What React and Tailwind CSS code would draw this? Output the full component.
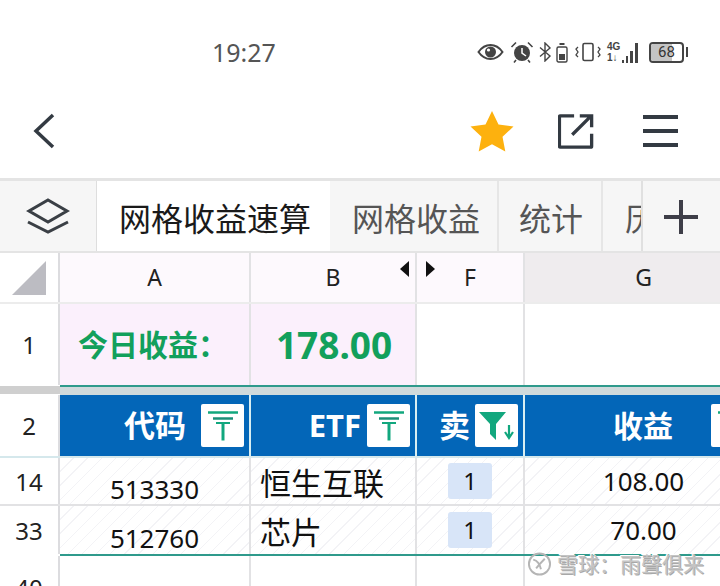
import React from 'react';

const cjk = "font-['Noto_Sans','Noto_Sans_CJK_SC',sans-serif]";
const cols = 'grid grid-cols-[60px_191px_166px_108px_237px]';
const stripes = 'bg-[repeating-linear-gradient(135deg,#ffffff_0,#ffffff_9px,#f3f3f6_9px,#f3f3f6_10px)]';

const StatusIcons = () => (
  <div className="flex items-center text-[#444]">
    <svg width="27" height="18" viewBox="0 0 27 18" fill="none">
      <path d="M1.5 9C5 4 9 2 13.5 2S22 4 25.5 9C22 14 18 16 13.5 16S5 14 1.5 9Z" stroke="currentColor" strokeWidth="2" />
      <circle cx="13.5" cy="9" r="5.5" fill="currentColor" />
      <circle cx="11.5" cy="7" r="1.6" fill="#fff" />
    </svg>
    <svg className="ml-[6px]" width="24" height="22" viewBox="0 0 24 22" fill="none">
      <circle cx="12" cy="12" r="8" fill="currentColor" />
      <path d="M12 7v5l4 3" stroke="#fff" strokeWidth="1.5" />
      <path d="M1.5 6 6 1.5M22.5 6 18 1.5M6 19l-2 2.5M18 19l2 2.5" stroke="currentColor" strokeWidth="1.6" />
    </svg>
    <svg className="ml-[5px]" width="13" height="20" viewBox="0 0 13 20" fill="none">
      <path d="M1 5.500 11 14l-5 5V1l5 5L1 14.500" stroke="currentColor" strokeWidth="1.400" />
    </svg>
    <svg className="ml-[4px]" width="12" height="21" viewBox="0 0 12 21" fill="none">
      <rect x="1" y="5" width="10" height="15" rx="1.500" stroke="currentColor" strokeWidth="1.400" />
      <rect x="3" y="12" width="6" height="6" fill="currentColor" />
      <rect x="3.500" y="1" width="5" height="2" fill="currentColor" />
    </svg>
    <svg className="ml-[7px]" width="26" height="20" viewBox="0 0 26 20" fill="none">
      <rect x="8" y="1.500" width="10" height="17" rx="1.500" stroke="currentColor" strokeWidth="1.600" />
      <path d="M3 5l-2 2 2 3-2 3 2 2M23 5l2 2-2 3 2 3-2 2" stroke="currentColor" strokeWidth="1.300" />
    </svg>
    <div className="ml-[6px] flex w-[33px] h-[22px] items-end">
      <div className="flex flex-col text-[10px] leading-[11px] font-bold font-['Liberation_Sans',sans-serif] w-[15px]">
        <span>4G</span>
        <span>1↓</span>
      </div>
      <div className="flex items-end gap-[2px]">
        <span className="w-[2px] h-[3px] bg-[#444]" />
        <span className="w-[2px] h-[7px] bg-[#444]" />
        <span className="w-[3px] h-[12px] bg-[#444]" />
        <span className="w-[3px] h-[20px] bg-[#444]" />
      </div>
    </div>
    <div className="ml-[9px] flex items-center gap-[2px]">
      <div className="relative w-[35px] h-[21px] rounded-[4px] border-2 border-[#444] overflow-hidden">
        <div className="w-[21px] h-full bg-[#c4c4c4]" />
        <span className="absolute inset-0 text-center text-[15px] leading-[17px] text-[#333] font-['Roboto',sans-serif]">68</span>
      </div>
      <span className="w-[2px] h-[10px] bg-[#444]" />
    </div>
  </div>
);

const Filter = ({ active }) => (
  <div className="w-[43px] h-[43px] shrink-0 rounded-[2px] bg-white flex items-center justify-center">
    {active ? (
      <svg width="38" height="30" viewBox="0 0 38 30">
        <path d="M1 1h27L18 13v16l-6-6V13Z" fill="#12a77e" />
        <path d="M31 14v11M27 21l4 6 4-6" stroke="#12a77e" strokeWidth="2.200" fill="none" />
      </svg>
    ) : (
      <svg width="32" height="30" viewBox="0 0 32 30">
        <path d="M1 1.500h30" stroke="#12a77e" strokeWidth="2.500" />
        <path d="M6 7.500h20" stroke="#1a8f78" strokeWidth="2.500" />
        <path d="M9 12h14" stroke="#12a77e" strokeWidth="2" />
        <path d="M16 12v17.500" stroke="#12a77e" strokeWidth="3" />
      </svg>
    )}
  </div>
);

const Gutter = ({ children, className = '' }) => (
  <div className={`flex items-center justify-center border-r-2 border-[#dcdcdf] text-[24px] text-[#222] bg-white ${className}`}>
    {children}
  </div>
);

const Cell = ({ children, className = '' }) => (
  <div className={`flex items-center border-r-2 border-[#e2e2e4] ${className}`}>{children}</div>
);

const Header = ({ label, gap, active }) => (
  <div className="flex items-center justify-end h-full pr-[5px] bg-[#0366b8] border-r-2 border-[#d8eef2] overflow-hidden">
    <span className="text-[31px] font-bold text-white whitespace-nowrap" style={{ marginRight: gap }}>{label}</span>
    <Filter active={active} />
  </div>
);

const Row = ({ num, code, name, sell, gain, rowClass }) => (
  <div className={`${cols} ${rowClass}`}>
    <Gutter className="pt-[1px]">{num}</Gutter>
    <Cell className={`justify-center pt-[15px] text-[26px] text-[#111] ${stripes}`}>{code}</Cell>
    <Cell className={`pl-[9px] pt-[4px] text-[31px] text-[#111] ${stripes}`}>{name}</Cell>
    <Cell className={`justify-center ${stripes}`}>
      <span className="w-[44px] h-[36px] rounded-[3px] bg-[#d8e5f8] text-center text-[24px] leading-[36px] text-[#111]">{sell}</span>
    </Cell>
    <div className={`flex items-center justify-center text-[26px] text-[#111] ${stripes}`}>{gain}</div>
  </div>
);

export default function App() {
  return (
    <div className={`relative w-[720px] h-[586px] overflow-hidden bg-white leading-none ${cjk}`}>
      {/* status bar */}
      <div className="flex items-center h-[100px] pl-[212px] pr-[32px] pt-[4px]">
        <span className="text-[25px] text-[#555]">19:27</span>
        <div className="ml-auto"><StatusIcons /></div>
      </div>

      {/* nav */}
      <div className="flex items-center h-[78px] pb-[17px] pl-[33px] pr-[42px]">
        <svg width="22" height="36" viewBox="0 0 22 36" fill="none" stroke="#333a42" strokeWidth="3.500">
          <path d="M20 2 3 18l17 16" />
        </svg>
        <svg className="ml-auto" width="44" height="42" viewBox="0 0 44 42">
          <path d="M22 1l6.500 13.500 15 2-11 10.300 2.800 14.700L22 34.300 8.700 41.500l2.800-14.700-11-10.300 15-2Z" fill="#fdb10e" />
        </svg>
        <svg className="ml-[44px]" width="36" height="36" viewBox="0 0 38 38" fill="none" stroke="#333a42" strokeWidth="3.500">
          <path d="M17 3H2.500a1 1 0 0 0-1 1v31a1 1 0 0 0 1 1h32a1 1 0 0 0 1-1V22" />
          <path d="M23 3h12.500v12M35 3 15 23" />
        </svg>
        <div className="ml-[49px] flex flex-col gap-[10px]">
          <span className="block w-[35px] h-[4px] bg-[#333a42]" />
          <span className="block w-[35px] h-[4px] bg-[#333a42]" />
          <span className="block w-[35px] h-[4px] bg-[#333a42]" />
        </div>
      </div>

      {/* sheet tabs */}
      <div className="flex h-[75px] border-t-[3px] border-b-2 border-[#e4e4e4] bg-[#f6f6f6] text-[32px]">
        <div className="flex items-center justify-center w-[97px] border-r border-[#dedede]">
          <svg width="44" height="36" viewBox="0 0 44 36" fill="none" stroke="#3a3f45" strokeWidth="3">
            <path d="M22 2 41 13 22 24 3 13Z" />
            <path d="M2 24l20 10 20-10" />
          </svg>
        </div>
        <div className="flex items-center justify-center w-[233px] pl-[3px] pt-[5px] bg-white text-[#1a1a1a]">网格收益速算</div>
        <div className="flex items-center justify-center w-[169px] pl-[5px] pt-[5px] border-r-2 border-[#e6e6e6] text-[#555]">网格收益</div>
        <div className="flex items-center justify-center w-[104px] pl-[2px] pt-[5px] border-r-2 border-[#e6e6e6] text-[#555]">统计</div>
        <div className="flex items-center w-[40px] pl-[22px] pt-[5px] overflow-hidden border-r-2 border-[#e0e0e0] text-[#555] whitespace-nowrap">历史</div>
        <div className="flex flex-1 items-center justify-center pr-[1px] pt-[1px]">
          <svg width="34" height="34" viewBox="0 0 34 34" fill="none" stroke="#3e3e48" strokeWidth="4">
            <path d="M0 17h34M17 0v34" />
          </svg>
        </div>
      </div>

      {/* column letters */}
      <div className={`${cols} h-[51px] border-b-2 border-[#ececec] text-[23px] text-[#222]`}>
        <Gutter>
          <svg width="36" height="36" viewBox="0 0 36 36"><path d="M35 1v34H1Z" fill="#bcbcc2" /></svg>
        </Gutter>
        <Cell className="justify-center bg-[#fdf9fd]">A</Cell>
        <Cell className="relative justify-center bg-[#fdf9fd]">
          B
          <svg className="absolute right-[6px] top-[8px]" width="9" height="16" viewBox="0 0 9 16"><path d="M9 0v16L0 8Z" fill="#111" /></svg>
        </Cell>
        <Cell className="relative justify-center bg-[#fdf9fd]">
          F
          <svg className="absolute left-[9px] top-[8px]" width="9" height="16" viewBox="0 0 9 16"><path d="M0 0v16l9-8Z" fill="#111" /></svg>
        </Cell>
        <div className="flex items-center justify-center bg-[#efecee]">G</div>
      </div>

      {/* row 1 */}
      <div className={`${cols} h-[81px]`}>
        <Gutter>1</Gutter>
        <Cell className="pl-[18px] bg-[#fbf0fc] text-[30px] font-bold text-[#12a05c] whitespace-nowrap overflow-hidden">今日收益：</Cell>
        <Cell className="justify-center pl-[2px] bg-[#fbf0fc] text-[37px] font-bold text-[#12a05c]">178.00</Cell>
        <Cell className="bg-white" />
        <div className="bg-white" />
      </div>

      {/* frozen divider */}
      <div className="flex h-[10px]">
        <div className="w-[60px] h-[8px] mt-[1px] bg-[#cfcfcf]" />
        <div className="flex-1 border-t-2 border-[#2f9a8c] bg-[#d0dadc]" />
      </div>

      {/* row 2 */}
      <div className={`${cols} h-[63px] border-b-2 border-[#d5e8ec]`}>
        <Gutter>2</Gutter>
        <Header label="代码" gap={15} />
        <Header label="ETF" gap={6} />
        <Header label="卖" gap={5} active />
        <div className="flex items-center h-full bg-[#0366b8] pl-[88px] overflow-hidden">
          <span className="text-[30px] font-bold text-white whitespace-nowrap">收益</span>
          <span className="ml-[38px]"><Filter /></span>
        </div>
      </div>

      <Row num="14" code="513330" name="恒生互联" sell="1" gain="108.00" rowClass="h-[48px] border-b-2 border-[#e2e2e4]" />
      <Row num="33" code="512760" name="芯片" sell="1" gain="70.00" rowClass="h-[48px]" />

      <div className="h-[2px] ml-[60px] bg-[#2f9a8c]" />

      <div className={`${cols} h-[40px]`}>
        <Gutter className="items-start pt-[20px]">40</Gutter>
        <Cell />
        <Cell />
        <Cell />
        <div />
      </div>

      {/* watermark */}
      <div className="absolute left-[527px] top-[552px] flex items-center gap-[5px] text-[#c4c4c4] [text-shadow:1px_1px_0_#a8a8a8,-1px_-1px_0_#ffffff]">
        <svg width="25" height="24" viewBox="0 0 25 25" fill="none" stroke="#b5b5b5" strokeWidth="2">
          <circle cx="12.500" cy="12.500" r="11" />
          <path d="M6 8c4 1 7 5 8 10M18 7c-3 3-5 5-9 10" />
        </svg>
        <span className="text-[21px] whitespace-nowrap">雪球：雨聲俱来</span>
      </div>
    </div>
  );
}
